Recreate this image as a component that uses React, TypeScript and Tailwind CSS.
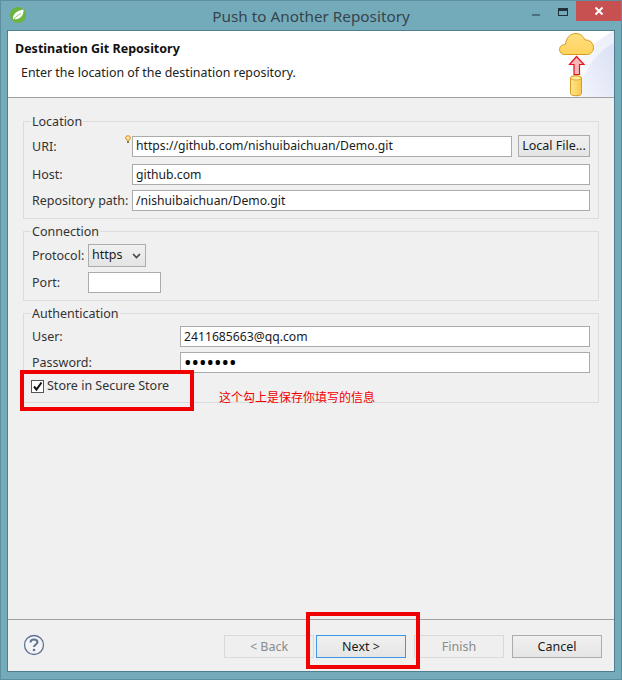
import type { ReactNode } from 'react';

const inputBase = 'h-[21px] bg-white border border-[#ababab] px-[3px] text-[12.2px] leading-[19px] text-[#1a1a1a] outline-none';

function SpringLogo() {
  return (
    <svg width="18" height="18" viewBox="0 0 18 18">
      <circle cx="9" cy="9" r="8" fill="#6cb33f" />
      <path d="M4 13.5C3.5 8 8 4.5 14.5 3.5C15 8.5 12 13 7 13.2C6 13.3 5 13 4 13.5Z" fill="#fff" />
      <path d="M4.5 13.5C7 10.5 9.5 8.5 12 7.5" stroke="#6cb33f" strokeWidth="0.8" fill="none" />
    </svg>
  );
}

function Banner() {
  return (
    <svg width="74" height="66" viewBox="0 0 74 66" className="shrink-0">
      <defs>
        <linearGradient id="swooshLight" x1="0" y1="1" x2="1" y2="0">
          <stop offset="0.2" stopColor="#ffffff" />
          <stop offset="1" stopColor="#e9edf9" />
        </linearGradient>
        <linearGradient id="swooshDark" x1="0" y1="1" x2="1" y2="0.3">
          <stop offset="0" stopColor="#f6f7fd" />
          <stop offset="1" stopColor="#dde3f5" />
        </linearGradient>
        <linearGradient id="cloudFill" x1="0" y1="0" x2="0" y2="1">
          <stop offset="0" stopColor="#ffdf80" />
          <stop offset="1" stopColor="#ffd25e" />
        </linearGradient>
        <linearGradient id="canFill" x1="0" y1="0" x2="1" y2="0">
          <stop offset="0" stopColor="#ffe68f" />
          <stop offset="1" stopColor="#f8c94c" />
        </linearGradient>
      </defs>
      <path d="M74 0V66H8C24 50 44 14 74 0Z" fill="url(#swooshLight)" />
      <path d="M74 12V66H36C42 44 54 22 74 12Z" fill="url(#swooshDark)" />
      <path
        d="M25 23.500C21.500 23.500 19.500 21 19.500 18.500C19.500 15.500 22 13.500 25.500 13.500C26 7 30 2.500 36 2.500C40.500 2.500 43.500 5.500 45 9C49.500 8.500 53.500 12 53.500 16.500C53.500 20.500 50.500 23.500 46.500 23.500Z"
        fill="url(#cloudFill)"
        stroke="#d79a1c"
      />
      <path d="M36.500 25.500L44 33.500H39.500V43.500H34V33.500H29.500Z" fill="#f8b7b7" stroke="#e8101a" strokeWidth="1.200" />
      <path d="M30.500 47C30.500 44 41.500 44 41.500 47V62.500C41.500 65.500 30.500 65.500 30.500 62.500Z" fill="url(#canFill)" stroke="#d79a1c" />
      <ellipse cx="36" cy="47" rx="5.500" ry="2" fill="#ffe9a6" stroke="#d79a1c" strokeWidth="0.800" />
    </svg>
  );
}

function Group({ title, className, children }: { title: string; className: string; children: ReactNode }) {
  return (
    <section className={`border border-[#dcdcdc] px-[8px] ${className}`}>
      <div className="-mt-[9px] -ml-[1px] w-fit bg-[#f0f0f0] px-[1px] text-[12.5px] leading-[18px] text-[#333]">{title}</div>
      {children}
    </section>
  );
}

function Row({ label, labelWidth, className, children }: { label: string; labelWidth: string; className?: string; children: ReactNode }) {
  return (
    <div className={`flex items-center ${className ?? ''}`}>
      <span className={`shrink-0 whitespace-nowrap pt-[2px] text-[12.5px] text-[#333] ${labelWidth}`}>{label}</span>
      {children}
    </div>
  );
}

function WizardButton({ label, kind }: { label: string; kind?: 'disabled' | 'focus' }) {
  const look =
    kind === 'disabled'
      ? 'border-[#d9d9d9] bg-[#efefef] text-[#8a8a8a]'
      : kind === 'focus'
        ? 'border-[#3c97e8] bg-gradient-to-b from-[#f0f0f0] to-[#e5e5e5] text-[#1a1a1a]'
        : 'border-[#acacac] bg-gradient-to-b from-[#f0f0f0] to-[#e5e5e5] text-[#1a1a1a]';
  return <button className={`h-[23px] w-[90px] border text-[12.5px] leading-[20px] ${look}`}>{label}</button>;
}

export default function App() {
  return (
    <div
      className="relative flex h-[680px] w-[622px] flex-col border border-[#5e8f9f] bg-[#74abbb] px-[6px] pb-[7px]"
      style={{ fontFamily: '"Noto Sans", "Noto Sans CJK SC", sans-serif' }}
    >
      {/* title bar */}
      <div className="grid h-[29px] shrink-0 grid-cols-[1fr_auto_1fr]">
        <div className="flex items-center pb-[1px] pl-[2px]">
          <SpringLogo />
        </div>
        <div className="pt-[3px] text-[15.3px] leading-[24px] text-[#36454b]">Push to Another Repository</div>
        <div className="-mr-[6px] flex items-start justify-end">
          <div className="mt-[13px] mr-[18px] h-[2px] w-[8px] bg-[#4c6f7c]" />
          <div className="mt-[7px] mr-[8px] h-[8px] w-[10px] border border-t-[3px] border-[#22303a]" />
          <div className="flex h-[20px] w-[45px] items-center justify-center bg-[#c75050]">
            <svg width="10" height="10" viewBox="0 0 10 10">
              <path d="M1.500 1.500L8.500 8.500M8.500 1.500L1.500 8.500" stroke="#fff" strokeWidth="2" />
            </svg>
          </div>
        </div>
      </div>

      {/* dialog body */}
      <div className="flex min-h-0 flex-1 flex-col border border-[#4d7f8f] bg-[#f0f0f0]">
        <header className="flex h-[67px] shrink-0 border-b border-[#a0a0a0] bg-white">
          <div className="flex-1 pt-[9px] pl-[7px]">
            <h1 className="text-[12.5px] leading-[18px] font-bold text-[#111]">Destination Git Repository</h1>
            <p className="mt-[6px] pl-[6px] text-[12.4px] leading-[18px] text-[#222]">Enter the location of the destination repository.</p>
          </div>
          <Banner />
        </header>

        <main className="relative flex-1 px-[15px] pt-[23px]">
          <Group title="Location" className="h-[98px]">
            <Row label="URI:" labelWidth="w-[100px]" className="mt-[4px]">
              <div className="relative">
                <svg width="6" height="9" viewBox="0 0 6 9" className="absolute -left-[7px] -top-[1px]">
                  <circle cx="3" cy="3" r="2.300" fill="#ffe9a0" stroke="#d88a1c" />
                  <path d="M2 6H4V8H2Z" fill="#8a7a50" />
                </svg>
                <input readOnly value="https://github.com/nishuibaichuan/Demo.git" className={`${inputBase} block w-[380px] border-[#5aa0e4] pb-[2px]`} />
              </div>
              <button className="ml-[6px] h-[22px] w-[73px] whitespace-nowrap border border-[#acacac] bg-gradient-to-b from-[#f0f0f0] to-[#e5e5e5] text-[12.5px] leading-[18px] text-[#1a1a1a]">
                Local File...
              </button>
            </Row>
            <Row label="Host:" labelWidth="w-[100px]" className="mt-[7px]">
              <input readOnly value="github.com" className={`${inputBase} w-[459px]`} />
            </Row>
            <Row label="Repository path:" labelWidth="w-[100px]" className="mt-[5px]">
              <input readOnly value="/nishuibaichuan/Demo.git" className={`${inputBase} w-[459px]`} />
            </Row>
          </Group>

          <Group title="Connection" className="mt-[12px] h-[70px]">
            <Row label="Protocol:" labelWidth="w-[56px]" className="mt-[3px]">
              <div className="flex h-[23px] w-[58px] items-center justify-between border border-[#acacac] bg-gradient-to-b from-[#f0f0f0] to-[#e5e5e5] pl-[3px] pr-[4px] text-[12.5px] text-[#1a1a1a]">
                https
                <svg width="9" height="6" viewBox="0 0 9 6">
                  <path d="M1 1L4.500 4.500L8 1" stroke="#444" strokeWidth="1.600" fill="none" />
                </svg>
              </div>
            </Row>
            <Row label="Port:" labelWidth="w-[56px]" className="mt-[5px]">
              <input readOnly className={`${inputBase} w-[73px]`} />
            </Row>
          </Group>

          <Group title="Authentication" className="mt-[12px] h-[90px]">
            <Row label="User:" labelWidth="w-[148px]" className="mt-[3px]">
              <input readOnly value="2411685663@qq.com" className={`${inputBase} w-[411px]`} />
            </Row>
            <Row label="Password:" labelWidth="w-[148px]" className="mt-[5px]">
              <div className={`${inputBase} flex w-[411px] items-center text-black`}>
                <span className="text-[20px] leading-[19px]">•••••••</span>
              </div>
            </Row>
            <div className="mt-[4px] -ml-[1px] flex items-center">
              <span className="flex h-[13px] w-[13px] items-center justify-center border border-[#555] bg-white">
                <svg width="11" height="11" viewBox="0 0 11 11">
                  <path d="M2 5.500L4.500 8.500L9.500 1.500" stroke="#111" strokeWidth="2" fill="none" />
                </svg>
              </span>
              <span className="ml-[3px] text-[12.5px] text-[#333]">Store in Secure Store</span>
            </div>
          </Group>

          {/* annotation over the form */}
          <div className="absolute left-[12px] top-[272px] h-[41px] w-[174px] border-[4px] border-[#f00000]" />
          <div className="absolute left-[211px] top-[292px] text-[12px] leading-[16px] text-[#f00000]">这个勾上是保存你填写的信息</div>
        </main>

        <footer className="flex h-[52px] shrink-0 items-start justify-between border-t border-[#a0a0a0] pl-[15px] pr-[12px] pt-[15px]">
          <svg width="22" height="22" viewBox="0 0 22 22" className="-mt-[1px]">
            <circle cx="11" cy="11" r="9.500" fill="#f4f4f6" stroke="#5f7394" strokeWidth="1.300" />
            <path d="M7.500 8.500C7.500 6.500 9 5.500 11 5.500C13 5.500 14.500 6.500 14.500 8.300C14.500 10.500 11 10.500 11 13" stroke="#5f7394" strokeWidth="2" fill="none" />
            <circle cx="11" cy="16" r="1.300" fill="#5f7394" />
          </svg>
          <div className="flex gap-[2px]">
            <WizardButton label="< Back" kind="disabled" />
            <div className="flex gap-[8px]">
              <WizardButton label="Next >" kind="focus" />
              <WizardButton label="Finish" kind="disabled" />
              <WizardButton label="Cancel" />
            </div>
          </div>
        </footer>
      </div>

      {/* annotation round the Next button */}
      <div className="absolute left-[305px] top-[611px] h-[57px] w-[114px] border-[4px] border-[#f00000]" />
    </div>
  );
}
